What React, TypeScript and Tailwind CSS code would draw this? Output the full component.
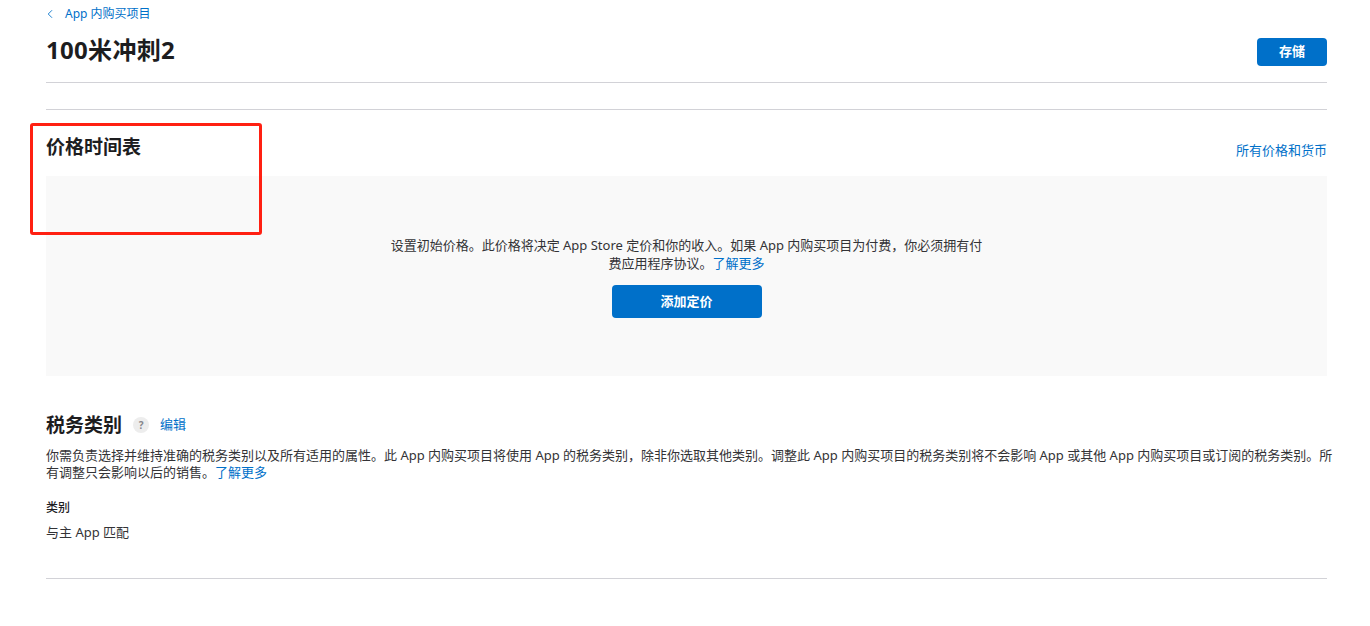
import { ChevronLeft } from "lucide-react";

const font = {
  fontFamily:
    '"Noto Sans", "Noto Sans CJK SC", "Liberation Sans", sans-serif',
};

export default function App() {
  return (
    <div className="min-h-screen bg-white text-[#1d1d1f]" style={font}>
      <div className="px-[46px] pr-[43px]">
        {/* HEADER */}
        <div className="pt-[6px]">
          <a className="flex items-center text-[12px] leading-[16px] text-[#0070c9]">
            <ChevronLeft size={14} strokeWidth={1.5} className="-ml-[3px]" />
            <span className="ml-[8px]">App 内购买项目</span>
          </a>
        </div>
        <div className="flex items-start justify-between">
          <h1 className="mt-[13px] text-[24px] leading-[30px] font-bold tracking-[0.3px]">100米冲刺2</h1>
          <button className="mt-[16px] h-[28px] w-[70px] rounded-[4px] bg-[#0070c9] text-[13px] font-bold text-white">
            存储
          </button>
        </div>
        <div className="mt-[16px] border-t border-[#d2d2d7]" />
        <div className="mt-[26px] border-t border-[#d2d2d7]" />

        {/* PRICE SCHEDULE */}
        <div className="relative">
          <div className="mt-[24px] flex items-end justify-between">
            <h2 className="text-[19px] leading-[26px] font-bold">价格时间表</h2>
            <a className="mb-[1px] text-[13px] leading-[18px] text-[#0070c9]">所有价格和货币</a>
          </div>
          {/* annotation box */}
          <div className="absolute -left-[16px] -top-[11px] h-[112px] w-[232px] rounded-[3px] border-[3px] border-[#ff2012]" />
          <div className="mt-[16px] flex h-[200px] flex-col items-center bg-[#f9f9f9] pt-[60px]">
            <p className="w-[598px] text-center text-[13px] leading-[18px] text-[#333336]">
              设置初始价格。此价格将决定 App Store 定价和你的收入。如果 App 内购买项目为付费，你必须拥有付费应用程序协议。
              <a className="text-[#0070c9]">了解更多</a>
            </p>
            <button className="mt-[13px] h-[33px] w-[150px] rounded-[4px] bg-[#0070c9] text-[13px] font-bold text-white">
              添加定价
            </button>
          </div>
        </div>

        {/* TAX CATEGORY */}
        <div className="mt-[36px] flex items-center">
          <h2 className="text-[19px] leading-[26px] font-bold">税务类别</h2>
          <span className="ml-[11px] flex h-[16px] w-[16px] items-center justify-center rounded-full bg-[#ededed] text-[10px] font-bold text-[#86868b]">
            ?
          </span>
          <a className="ml-[11px] text-[13px] text-[#0070c9]">编辑</a>
        </div>
        <p className="-mr-[8px] mt-[9px] text-[13px] leading-[17px] text-[#333336]">
          你需负责选择并维持准确的税务类别以及所有适用的属性。此 App 内购买项目将使用 App 的税务类别，除非你选取其他类别。调整此 App 内购买项目的税务类别将不会影响 App 或其他 App 内购买项目或订阅的税务类别。所有调整只会影响以后的销售。
          <a className="text-[#0070c9]">了解更多</a>
        </p>
        <div className="mt-[19px] text-[12px] leading-[16px] font-medium">类别</div>
        <div className="mt-[7px] text-[13px] leading-[18px] text-[#333336]">与主 App 匹配</div>
        <div className="mt-[37px] border-t border-[#d2d2d7]" />
      </div>
    </div>
  );
}
